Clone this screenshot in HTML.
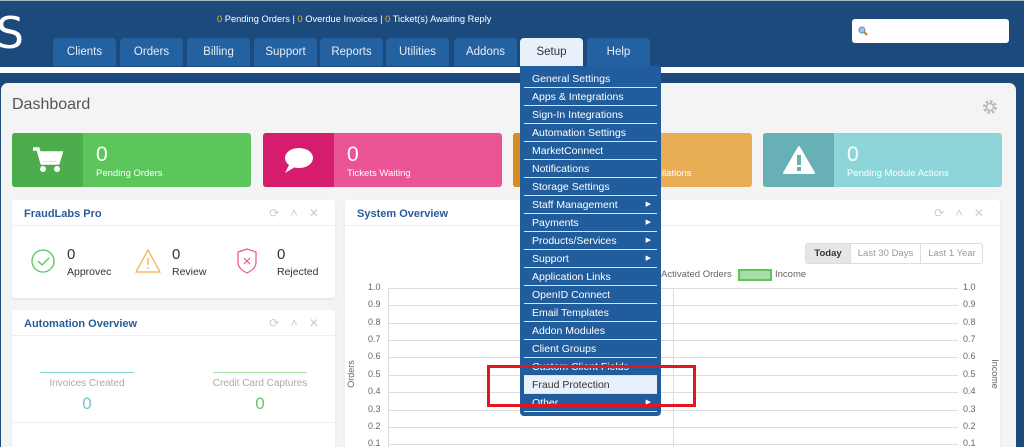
<!DOCTYPE html>
<html style="width:1024px;height:447px;overflow:hidden"><head><meta charset="utf-8"><style>
*{box-sizing:border-box;margin:0;padding:0}
body{width:1024px;height:447px;overflow:hidden;background:#1c4a7d;font-family:"Liberation Sans",sans-serif;position:relative}
.a{position:absolute}
.tab{position:absolute;top:38px;height:28px;width:63px;background:#2461a1;border-radius:4px 4px 0 0;color:#e6eef8;font-size:11.5px;text-align:center;line-height:28px}
.stats{left:217px;top:14px;font-size:9.3px;color:#fff}
.stats b{color:#f0b323;font-weight:normal}
.panel{position:absolute;left:1px;top:83px;width:1015px;height:364px;background:#f4f4f4;border-radius:7px 7px 0 0}
.box{position:absolute;top:133px;height:54px;width:239px;border-radius:3px;overflow:hidden;color:#fff}
.box .ic{position:absolute;left:0;top:0;width:71px;height:54px}
.box .n{position:absolute;left:84px;top:10px;font-size:21px}
.box .l{position:absolute;left:84px;top:35px;font-size:9.5px}
.card{position:absolute;background:#fff;border-radius:3px;box-shadow:0 1px 2px rgba(0,0,0,.08)}
.card .h{height:26px;border-bottom:1px solid #eee;font-size:11px;font-weight:bold;color:#2a5c9a;padding:8px 12px}
.tools{position:absolute;top:6px;right:12px;color:#ccc;font-size:12px;letter-spacing:4px}
.dd{position:absolute;left:520px;top:66px;width:141px;height:350px;background:#215d9c;border-radius:0 0 4px 4px}
.dd div{position:absolute;left:4px;width:133px;height:18px;border-bottom:1px solid #d9e3ee;color:#fff;font-size:10.5px;padding-left:8px;line-height:18px}
.dd div span{position:absolute;right:6px;font-size:7px}
.yl{position:absolute;font-size:9px;color:#666}
.gl{position:absolute;left:388px;width:570px;height:1px;background:#ddd}
</style></head><body>
<div class="a" style="left:0;top:0;width:1024px;height:1px;background:#a8b6c6"></div>
<div class="a" style="left:-4px;top:8px;font-size:44px;color:#fff;font-family:'DejaVu Sans',sans-serif">S</div>
<div class="a stats"><b>0</b> Pending Orders | <b>0</b> Overdue Invoices | <b>0</b> Ticket(s) Awaiting Reply</div>
<div class="a" style="left:852px;top:19px;width:157px;height:24px;background:#fff;border-radius:3px"><svg class="a" style="left:6px;top:7px" width="10" height="10"><circle cx="4" cy="4" r="3" fill="#9cc4ee" stroke="#6a8fb8"/><line x1="6" y1="6" x2="9" y2="9" stroke="#c08040" stroke-width="2"/></svg></div>
<div class="tab" style="left:53px">Clients</div>
<div class="tab" style="left:120px">Orders</div>
<div class="tab" style="left:187px">Billing</div>
<div class="tab" style="left:254px">Support</div>
<div class="tab" style="left:320px">Reports</div>
<div class="tab" style="left:386px">Utilities</div>
<div class="tab" style="left:454px">Addons</div>
<div class="tab" style="left:520px;background:#e8f0fb;color:#333">Setup</div>
<div class="tab" style="left:587px">Help</div>
<div class="a" style="left:0;top:67px;width:1024px;height:6px;background:#fff"></div>
<div class="panel"></div>
<div class="a" style="left:12px;top:96px;font-size:16px;color:#555">Dashboard</div>
<svg class="a" style="left:982px;top:99px" width="16" height="16" viewBox="0 0 16 16"><circle cx="8" cy="8" r="5.5" fill="none" stroke="#bbb" stroke-width="3" stroke-dasharray="2.5 1.8"/><circle cx="8" cy="8" r="3.5" fill="none" stroke="#bbb" stroke-width="1.5"/></svg>

<div class="box" style="left:12px;background:#5cc65c"><div class="ic" style="background:#4cad4c"><svg style="position:absolute;left:20px;top:13px" width="32" height="28" viewBox="0 0 32 28"><path d="M1 3h5l4 14h16l3-10H8" fill="none" stroke="#fff" stroke-width="3.5"/><rect x="9" y="6" width="19" height="9" fill="#fff"/><circle cx="11" cy="23" r="3" fill="#fff"/><circle cx="25" cy="23" r="3" fill="#fff"/></svg></div><div class="n">0</div><div class="l">Pending Orders</div></div>
<div class="box" style="left:263px;background:#ea5495"><div class="ic" style="background:#d61c6c"><svg style="position:absolute;left:20px;top:14px" width="32" height="28" viewBox="0 0 32 28"><ellipse cx="16" cy="11" rx="14" ry="10" fill="#fff"/><path d="M6 18L2 26l10-6z" fill="#fff"/></svg></div><div class="n">0</div><div class="l">Tickets Waiting</div></div>
<div class="box" style="left:513px;background:#e9ae55"><div class="ic" style="background:#d98c21"></div><div class="n">0</div><div class="l">Pending Cancellations</div></div>
<div class="box" style="left:763px;background:#8dd5d9"><div class="ic" style="background:#67b0b5"><svg style="position:absolute;left:20px;top:12px" width="32" height="30" viewBox="0 0 32 30"><path d="M16 2L31 28H1z" fill="#fff" stroke="#fff" stroke-linejoin="round" stroke-width="2"/><rect x="14" y="10" width="4" height="10" fill="#67b0b5"/><rect x="14" y="22" width="4" height="4" fill="#67b0b5"/></svg></div><div class="n">0</div><div class="l">Pending Module Actions</div></div>

<div class="card" style="left:12px;top:200px;width:323px;height:98px"><div class="h">FraudLabs Pro</div><div class="tools">⟳ ˄ ✕</div>
<svg class="a" style="left:18px;top:48px" width="26" height="26"><circle cx="13" cy="13" r="11" fill="none" stroke="#5cc65c" stroke-width="1.3"/><path d="M8 13l4 4 7-7" fill="none" stroke="#5cc65c" stroke-width="1.3"/></svg>
<div class="a" style="left:55px;top:46px;font-size:15px;color:#333">0</div><div class="a" style="left:55px;top:66px;font-size:10.5px;color:#333">Approvec</div>
<svg class="a" style="left:122px;top:48px" width="28" height="26"><path d="M14 2L26 24H2z" fill="none" stroke="#f0ad4e" stroke-width="1.2"/><path d="M14 10v7M14 19v2" stroke="#f0ad4e" stroke-width="1.2"/></svg>
<div class="a" style="left:160px;top:46px;font-size:15px;color:#333">0</div><div class="a" style="left:160px;top:66px;font-size:10.5px;color:#333">Review</div>
<svg class="a" style="left:224px;top:48px" width="22" height="26"><path d="M2 4l9-3 9 3v10c0 6-5 9-9 11-4-2-9-5-9-11z" fill="none" stroke="#ea5495" stroke-width="1.2"/><path d="M8 10l6 6M14 10l-6 6" stroke="#ea5495" stroke-width="1.1"/></svg>
<div class="a" style="left:265px;top:46px;font-size:15px;color:#333">0</div><div class="a" style="left:265px;top:66px;font-size:10.5px;color:#333">Rejected</div>
</div>
<div class="card" style="left:12px;top:310px;width:323px;height:140px"><div class="h">Automation Overview</div><div class="tools">⟳ ˄ ✕</div>
<div class="a" style="left:28px;top:62px;width:94px;height:1px;background:#7fd3d8"></div>
<div class="a" style="left:201px;top:62px;width:94px;height:1px;background:#a8e2a8"></div>
<div class="a" style="left:0;top:68px;width:150px;text-align:center;font-size:10px;color:#aaa">Invoices Created</div>
<div class="a" style="left:173px;top:68px;width:150px;text-align:center;font-size:10px;color:#aaa">Credit Card Captures</div>
<div class="a" style="left:0;top:84px;width:150px;text-align:center;font-size:17px;color:#6cc6cc">0</div>
<div class="a" style="left:173px;top:84px;width:150px;text-align:center;font-size:17px;color:#6ac46a">0</div>
<div class="a" style="left:0;top:112px;width:323px;height:1px;background:#eee"></div>
</div>
<div class="card" style="left:345px;top:200px;width:655px;height:260px"><div class="h">System Overview</div><div class="tools">⟳ ˄ ✕</div></div>
<div class="a" style="left:805px;top:243px;width:178px;height:21px;border:1px solid #ddd;border-radius:3px;font-size:9.5px;color:#999;line-height:19px;background:#fff">
<span class="a" style="left:0;width:44px;background:#e6e6e6;text-align:center;color:#333;font-weight:bold;height:19px">Today</span>
<span class="a" style="left:44px;width:71px;text-align:center;border-left:1px solid #ddd;border-right:1px solid #ddd">Last 30 Days</span>
<span class="a" style="left:115px;width:62px;text-align:center">Last 1 Year</span></div>
<div class="a" style="left:661px;top:269px;font-size:9.5px;color:#666">Activated Orders</div>
<div class="a" style="left:738px;top:269px;width:34px;height:12px;background:#a8dca8;border:2px solid #5cc65c"></div>
<div class="a" style="left:775px;top:269px;font-size:9.5px;color:#666">Income</div>
<div class="gl" style="top:288px"></div><div class="gl" style="top:305px"></div><div class="gl" style="top:323px"></div><div class="gl" style="top:340px"></div><div class="gl" style="top:357px"></div><div class="gl" style="top:375px"></div><div class="gl" style="top:392px"></div><div class="gl" style="top:410px"></div><div class="gl" style="top:427px"></div><div class="gl" style="top:444px"></div>
<div class="a" style="left:388px;top:288px;width:1px;height:160px;background:#ddd"></div>
<div class="a" style="left:673px;top:288px;width:1px;height:160px;background:#ddd"></div>
<div class="yl" style="left:368px;top:282px">1.0</div><div class="yl" style="left:368px;top:299px">0.9</div><div class="yl" style="left:368px;top:317px">0.8</div><div class="yl" style="left:368px;top:334px">0.7</div><div class="yl" style="left:368px;top:351px">0.6</div><div class="yl" style="left:368px;top:369px">0.5</div><div class="yl" style="left:368px;top:386px">0.4</div><div class="yl" style="left:368px;top:404px">0.3</div><div class="yl" style="left:368px;top:421px">0.2</div><div class="yl" style="left:368px;top:438px">0.1</div>
<div class="yl" style="left:963px;top:282px">1.0</div><div class="yl" style="left:963px;top:299px">0.9</div><div class="yl" style="left:963px;top:317px">0.8</div><div class="yl" style="left:963px;top:334px">0.7</div><div class="yl" style="left:963px;top:351px">0.6</div><div class="yl" style="left:963px;top:369px">0.5</div><div class="yl" style="left:963px;top:386px">0.4</div><div class="yl" style="left:963px;top:404px">0.3</div><div class="yl" style="left:963px;top:421px">0.2</div><div class="yl" style="left:963px;top:438px">0.1</div>
<div class="yl" style="left:336px;top:369px;transform:rotate(-90deg);width:30px;text-align:center">Orders</div>
<div class="yl" style="left:978px;top:369px;transform:rotate(90deg);width:34px;text-align:center">Income</div>
<div class="a" style="left:1016px;top:83px;width:8px;height:364px;background:#1c4a7d"></div>

<div class="dd">
<div style="top:4px">General Settings</div><div style="top:22px">Apps &amp; Integrations</div><div style="top:40px">Sign-In Integrations</div><div style="top:58px">Automation Settings</div><div style="top:76px">MarketConnect</div><div style="top:94px">Notifications</div><div style="top:112px">Storage Settings</div><div style="top:130px">Staff Management<span>▶</span></div><div style="top:148px">Payments<span>▶</span></div><div style="top:166px">Products/Services<span>▶</span></div><div style="top:184px">Support<span>▶</span></div><div style="top:202px">Application Links</div><div style="top:220px">OpenID Connect</div><div style="top:238px">Email Templates</div><div style="top:256px">Addon Modules</div><div style="top:274px">Client Groups</div><div style="top:292px">Custom Client Fields</div><div style="top:310px;background:#e8f0fb;color:#333">Fraud Protection</div><div style="top:328px">Other<span>▶</span></div>
<div style="top:340px;height:1px;border:0;background:#d9e3ee"></div>
</div>
<div class="a" style="left:487px;top:365px;width:209px;height:42px;border:3px solid #e3161f"></div>
</body></html>
